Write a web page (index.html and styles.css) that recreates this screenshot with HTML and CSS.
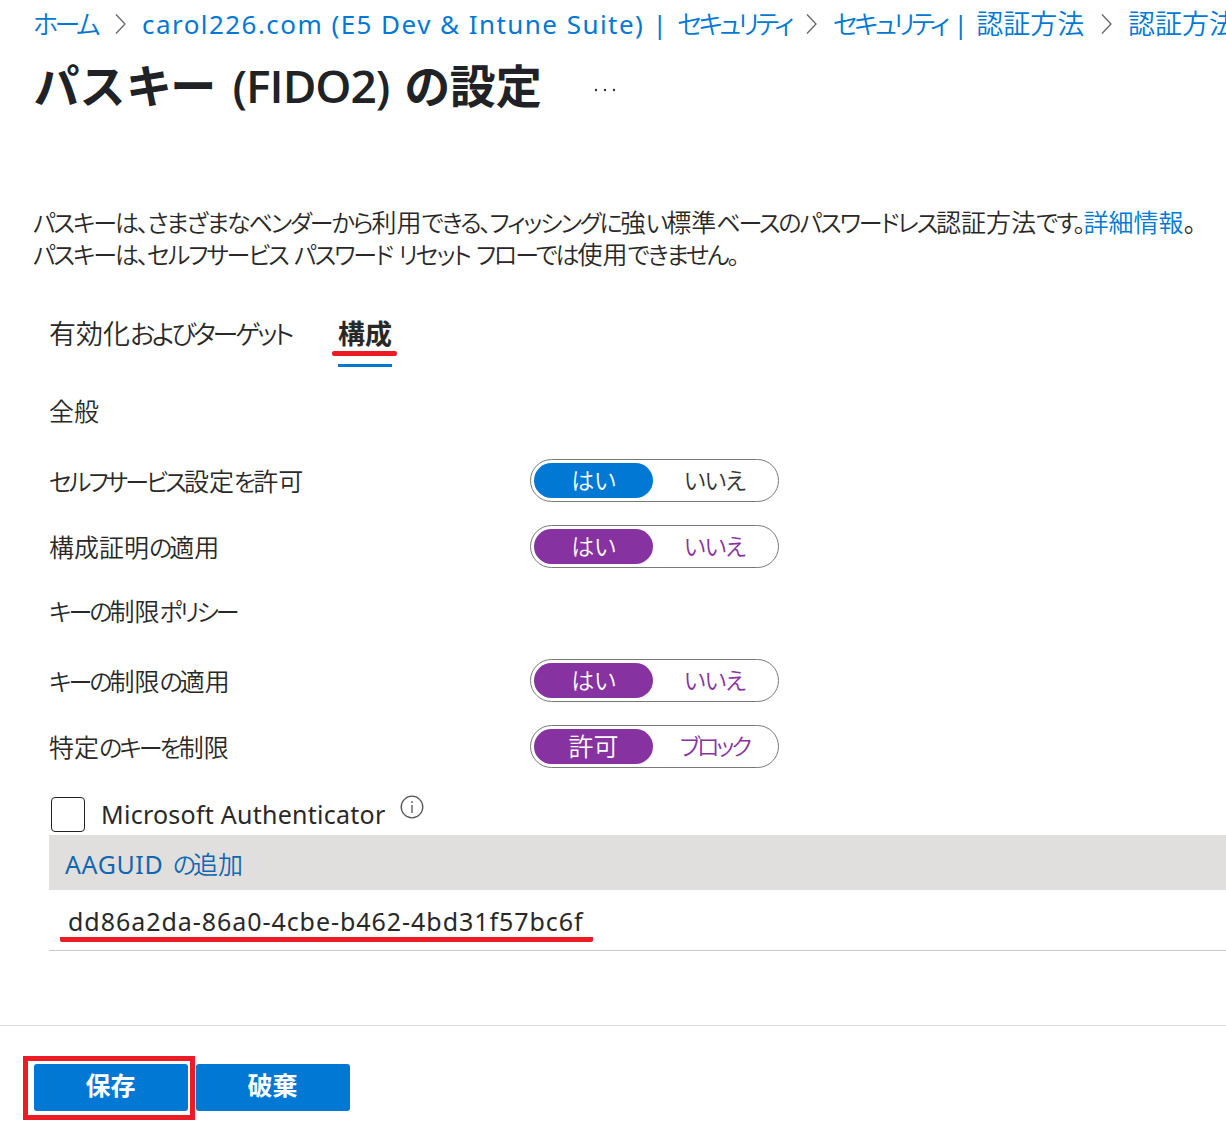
FILE: index.html
```html
<!DOCTYPE html>
<html lang="ja">
<head>
    <meta charset="UTF-8">
    <meta name="viewport" content="width=device-width, initial-scale=1.0">
    <title>パスキー (FIDO2) の設定</title>
    <link rel="stylesheet" href="styles.css">
</head>
<body>

    <!-- Breadcrumb -->
    <nav class="breadcrumb">
        <a class="crumb-home"><span class="kana">ホーム</span></a>
        <svg class="chevron" viewBox="0 0 12 20"><path d="M1 .5l9 9.5-9 9.5"/></svg>
        <a class="crumb-tenant"><span class="latin">carol226.com (E5 Dev &amp; Intune Suite) |</span> <span class="kana">セキュリティ</span></a>
        <svg class="chevron" viewBox="0 0 12 20"><path d="M1 .5l9 9.5-9 9.5"/></svg>
        <a class="crumb-security"><span class="kana">セキュリティ</span> <span class="latin">|</span> 認証方法</a>
        <svg class="chevron" viewBox="0 0 12 20"><path d="M1 .5l9 9.5-9 9.5"/></svg>
        <a class="crumb-methods">認証方法</a>
    </nav>

    <!-- Title -->
    <header class="title-bar">
        <h1><span class="title-kana">パスキー</span> <span class="title-latin">(FIDO2)</span> の設定</h1>
        <svg class="more" viewBox="0 0 24 4"><circle cx="3" cy="2" r="1.2"/><circle cx="12" cy="2" r="1.2"/><circle cx="21" cy="2" r="1.2"/></svg>
    </header>

    <div class="description">
        <p><span class="kana">パスキーは、さまざまなベンダーから</span>利用<span class="kana">できる、フィッシングに</span>強<span class="kana">い</span>標準<span class="kana">ベースのパスワードレス</span>認証方法<span class="kana">です。</span><a>詳細情報</a>。</p>
        <p><span class="kana">パスキーは、セルフサービス パスワード リセット フローでは</span>使用<span class="kana">できません。</span></p>
    </div>

    <!-- Tabs -->
    <div class="tabs">
        <div class="tab">有効化<span class="kana">およびターゲット</span></div>
        <div class="tab active">構成</div>
    </div>

    <!-- Settings -->
    <main class="settings">
        <h2 class="general">全般</h2>
        <div class="setting-row">
            <span class="label"><span class="kana">セルフサービス</span>設定<span class="kana">を</span>許可</span>
            <div class="toggle blue"><span class="on">はい</span><span class="off">いいえ</span></div>
        </div>
        <div class="setting-row">
            <span class="label">構成証明<span class="kana">の</span>適用</span>
            <div class="toggle"><span class="on">はい</span><span class="off">いいえ</span></div>
        </div>
        <h2 class="policy"><span class="kana">キーの</span>制限<span class="kana">ポリシー</span></h2>
        <div class="setting-row">
            <span class="label"><span class="kana">キーの</span>制限<span class="kana">の</span>適用</span>
            <div class="toggle"><span class="on">はい</span><span class="off">いいえ</span></div>
        </div>
        <div class="setting-row">
            <span class="label">特定<span class="kana">のキーを</span>制限</span>
            <div class="toggle"><span class="on kanji">許可</span><span class="off block">ブロック</span></div>
        </div>

        <div class="authenticator">
            <span class="checkbox"></span>
            <span class="auth-label">Microsoft Authenticator</span>
            <svg class="info" viewBox="0 0 24 24"><circle cx="12" cy="12" r="10.8"/><path d="M12 10v8M12 6v2"/></svg>
        </div>

        <div class="aaguid-header"><a><span class="aaguid">AAGUID</span> <span class="kana">の</span>追加</a></div>
        <div class="aaguid-row"><span class="guid">dd86a2da-86a0-4cbe-b462-4bd31f57bc6f</span></div>
    </main>

    <!-- Footer buttons -->
    <footer>
        <div class="highlight"><button>保存</button></div>
        <button>破棄</button>
    </footer>

</body>
</html>
```
FILE: styles.css
```css
* {
    box-sizing: border-box;
}

body {
    font-family: "Noto Sans", "Noto Sans CJK JP", sans-serif;
    font-size: 25px;
    font-weight: 350;
    font-feature-settings: "palt";
    color: #292827;
    background-color: #fff;
    margin: 0;
    height: 1135px;
    overflow: hidden;
    white-space: nowrap;
}

h1, h2, p {
    margin: 0;
}

a {
    color: #0078d4;
    text-decoration: none;
}

/* Narrow kana, as in UI fonts */
.kana {
    font-size: 24px;
    letter-spacing: -2.9px;
}

/* Breadcrumb */
.breadcrumb {
    display: flex;
    align-items: center;
    height: 48px;
    padding-left: 33px;
    font-size: 27px;
}

.breadcrumb a {
    flex: none;
    line-height: 46px;
}

.breadcrumb .kana {
    font-size: 26px;
    letter-spacing: -3.5px;
}

.crumb-home {
    width: 82px;
}

.crumb-tenant {
    width: 664px;
}

.crumb-security {
    width: 268px;
}

.latin {
    font-size: 26px;
    font-weight: 400;
    letter-spacing: 1.45px;
}

.crumb-tenant .kana {
    margin-left: 2px;
}

.chevron {
    flex: none;
    width: 12px;
    height: 20px;
    margin-right: 15px;
    fill: none;
    stroke: #666;
    stroke-width: 1.3;
}

/* Title */
.title-bar {
    display: flex;
    align-items: center;
    height: 80px;
    padding-left: 34px;
}

h1 {
    width: 559px;
    padding-bottom: 5px;
    font-size: 46px;
    font-weight: 700;
    line-height: 75px;
    color: #202225;
}

.title-kana {
    letter-spacing: 2px;
}

.title-latin {
    margin: 0 3px 0 3px;
    font-family: "Open Sans", sans-serif;
    font-weight: 600;
    letter-spacing: -1px;
}

.more {
    width: 24px;
    height: 4px;
    margin-top: 3px;
    fill: #333;
}

/* Description */
.description {
    padding: 78px 0 0 33px;
    line-height: 32px;
}

.description p {
    height: 32px;
}

.description .kana {
    letter-spacing: -2.05px;
    word-spacing: 2px;
}

/* Tabs */
.tabs {
    display: flex;
    height: 89px;
    margin-top: 28px;
    padding-left: 49px;
    font-size: 27px;
    line-height: 72px;
}

.tab {
    width: 289px;
}

.tab .kana {
    font-size: 26px;
    letter-spacing: -3.2px;
}

.tab.active {
    position: relative;
    width: 54px;
    height: 69px;
    border-bottom: 3px solid #0078d4;
    font-weight: 700;
}

.tab.active::after {
    content: "";
    position: absolute;
    left: -6px;
    top: 53px;
    width: 65px;
    height: 5px;
    border-radius: 2px;
    background-color: #ed1c24;
}

/* Settings */
.settings {
    padding-left: 49px;
}

h2 {
    font-size: 25px;
    font-weight: 350;
    line-height: 36px;
}

.general {
    height: 72px;
    padding-top: 6px;
}

.policy {
    height: 68px;
    padding-top: 2px;
}

.setting-row {
    display: flex;
    align-items: flex-start;
    height: 66px;
}

.label {
    width: 481px;
    line-height: 45px;
}

.toggle {
    display: flex;
    width: 249px;
    height: 43px;
    padding: 3px;
    border: 1px solid #7b7978;
    border-radius: 22px;
    font-size: 23px;
    line-height: 34px;
    text-align: center;
    color: #8632a0;
}

.toggle .on {
    flex: none;
    width: 119px;
    height: 35px;
    border-radius: 18px;
    background-color: #8632a0;
    color: #fff;
}

.toggle .off {
    flex: none;
    width: 123px;
    letter-spacing: -1px;
}

.toggle .kanji {
    font-size: 25px;
}

.toggle .block {
    letter-spacing: -3px;
}

.toggle.blue {
    color: #333;
}

.toggle.blue .on {
    background-color: #0078d4;
}

.authenticator {
    display: flex;
    height: 44px;
    padding: 6px 0 0 2px;
}

.checkbox {
    width: 34px;
    height: 35px;
    border: 1px solid #222;
    border-radius: 4px;
}

.auth-label {
    width: 299px;
    margin-left: 16px;
    font-weight: 400;
    letter-spacing: 0.25px;
    line-height: 34px;
}

.info {
    width: 24px;
    height: 24px;
    margin-top: -2px;
    fill: none;
    stroke: #555;
    stroke-width: 1.3;
}

.aaguid-header {
    height: 55px;
    padding-left: 16px;
    background-color: #e1dfdd;
    line-height: 58px;
}

.aaguid-header a {
    color: #0f67b1;
}

.aaguid {
    margin-right: 3px;
    font-weight: 400;
    letter-spacing: 0.6px;
}

.aaguid-row {
    height: 61px;
    padding-left: 11px;
    border-bottom: 1px solid #c8c8c8;
}

.guid {
    display: block;
    width: 533px;
    height: 52px;
    padding-left: 8px;
    border-bottom: 5px solid #ed1c24;
    border-radius: 2px;
    font-weight: 400;
    letter-spacing: 0.95px;
    line-height: 63px;
}

/* Footer */
footer {
    display: flex;
    align-items: flex-start;
    margin-top: 74px;
    padding: 30px 0 0 23px;
    border-top: 1px solid #dcdcdc;
}

.highlight {
    width: 172px;
    height: 64px;
    margin-right: 1px;
    padding: 3px 6px;
    border: 5px solid #ed1c24;
}

button {
    display: block;
    width: 154px;
    height: 47px;
    margin: 0;
    padding: 0 1px 8px 0;
    border: none;
    border-radius: 3px;
    background-color: #0078d4;
    color: #fff;
    font-family: inherit;
    font-size: 25px;
    font-weight: 700;
}

footer > button {
    margin-top: 8px;
}
```
